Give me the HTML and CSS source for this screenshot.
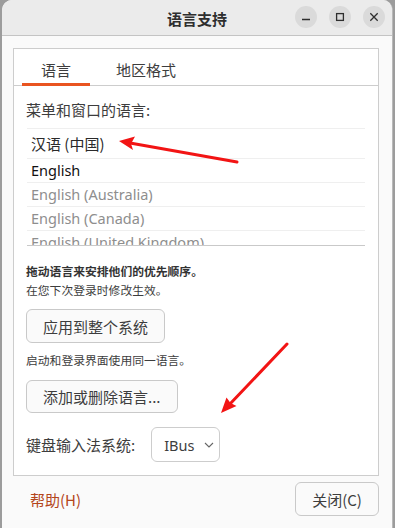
FILE: index.html
```html
<!DOCTYPE html>
<html lang="zh-CN">
<head>
<meta charset="utf-8">
<title>语言支持</title>
<link rel="stylesheet" href="styles.css">
</head>
<body>
<div class="window">
  <header class="titlebar">
    <div></div>
    <div class="title">语言支持</div>
    <div class="controls">
      <span class="wbtn"><svg width="10" height="10" viewBox="0 0 10 10"><path d="M1 7.5 H9" stroke="#2e2e2e" stroke-width="1.3"/></svg></span>
      <span class="wbtn"><svg width="10" height="10" viewBox="0 0 10 10"><rect x="1.6" y="1.6" width="6.8" height="6.8" fill="none" stroke="#2e2e2e" stroke-width="1.3"/></svg></span>
      <span class="wbtn"><svg width="10" height="10" viewBox="0 0 10 10"><path d="M1.3 1.3 L8.7 8.7 M8.7 1.3 L1.3 8.7" stroke="#2e2e2e" stroke-width="1.3"/></svg></span>
    </div>
  </header>

  <main class="content">
    <section class="notebook">
      <nav class="tabs">
        <div class="tab active">语言</div>
        <div class="tab">地区格式</div>
      </nav>
      <div class="page">
        <div class="label">菜单和窗口的语言:</div>
        <div class="langlist">
          <div class="row first">汉语 (中国)</div>
          <div class="row main">English</div>
          <div class="row dim">English (Australia)</div>
          <div class="row dim">English (Canada)</div>
          <div class="row dim">English (United Kingdom)</div>
        </div>
        <p class="note bold">拖动语言来安排他们的优先顺序。</p>
        <p class="note">在您下次登录时修改生效。</p>
        <button class="btn apply">应用到整个系统</button>
        <p class="note note3">启动和登录界面使用同一语言。</p>
        <button class="btn addrm">添加或删除语言...</button>
        <div class="imrow">
          <span class="label">键盘输入法系统:</span>
          <span class="combo">IBus<svg width="10" height="6" viewBox="0 0 10 6"><path d="M1 1 L5 5 L9 1" fill="none" stroke="#666" stroke-width="1.1"/></svg></span>
        </div>
      </div>
    </section>
    <footer class="footer">
      <span class="help">帮助(H)</span>
      <button class="btn close">关闭(C)</button>
    </footer>
  </main>
</div>

<svg class="annot" width="395" height="528" viewBox="0 0 395 528">
  <line x1="237" y1="162" x2="130" y2="143" stroke="#f21414" stroke-width="3" stroke-linecap="round"/>
  <polygon points="119,141 135,136.5 131,143.8 133,150" fill="#f21414"/>
  <line x1="287" y1="344" x2="229" y2="405" stroke="#f21414" stroke-width="3" stroke-linecap="round"/>
  <polygon points="221,413 226.5,397.5 230.5,403 236.5,406" fill="#f21414"/>
</svg>
</body>
</html>
```

FILE: styles.css
```css
* { box-sizing: border-box; }
html, body { margin: 0; padding: 0; }
body {
  width: 395px;
  height: 528px;
  overflow: hidden;
  background: #9c9c9c;
  font-family: "Noto Sans", "Noto Sans CJK SC", sans-serif;
  color: #3d3d3d;
  position: relative;
}
.window {
  margin-left: 2px;
  width: 391px;
  height: 528px;
  background: #fafafa;
  border-right: 1px solid #b9b9b9;
  border-radius: 10px 10px 0 0;
  overflow: hidden;
  display: flex;
  flex-direction: column;
}
.titlebar {
  height: 36px;
  flex: none;
  background: #ebebeb;
  border-bottom: 1px solid #c4c4c4;
  display: grid;
  grid-template-columns: 1fr auto 1fr;
  align-items: start;
}
.title {
  font-family: "Noto Sans CJK SC", sans-serif;
  font-weight: 700;
  font-size: 15px;
  line-height: 20px;
  padding-top: 9px;
  color: #2e2e2e;
}
.controls {
  display: flex;
  justify-content: flex-end;
  gap: 12px;
  padding-top: 6px;
  padding-right: 7px;
}
.wbtn {
  width: 22px;
  height: 22px;
  border-radius: 50%;
  background: #dadada;
  display: flex;
  align-items: center;
  justify-content: center;
}
.wbtn svg { display: block; }
.content {
  flex: 1;
  padding: 12px 13px 0 11px;
  display: flex;
  flex-direction: column;
}
.notebook {
  border: 1px solid #cdcdcd;
  background: #ffffff;
}
.tabs {
  height: 37px;
  display: flex;
  gap: 7px;
  padding-left: 8px;
  box-shadow: inset 0 -1px 0 #cdcdcd;
}
.tab {
  height: 37px;
  padding: 3px 19px 0;
  display: flex;
  align-items: center;
  font-family: "Noto Sans CJK SC", sans-serif;
  font-size: 15px;
  color: #3d3d3d;
}
.tab.active { box-shadow: inset 0 -3px 0 #e95420; }
.page {
  padding: 14px 13px 13px 12px;
}
.label {
  font-family: "Noto Sans CJK SC", sans-serif;
  font-size: 15px;
  line-height: 20px;
  color: #3d3d3d;
}
.langlist {
  margin: 8px 0 0 1px;
  height: 118px;
  overflow: hidden;
  border-bottom: 1px solid #c9c9c9;
}
.row {
  height: 24px;
  padding: 0 0 2px 4px;
  border-bottom: 1px solid #efefef;
  display: flex;
  align-items: center;
  font-size: 14.5px;
}
.row.first {
  height: 31px;
  padding-bottom: 1px;
  border-top: 1px solid #efefef;
  font-family: "Noto Sans CJK SC", sans-serif;
  font-size: 15px;
  color: #2a2a2a;
}
.row.main { color: #111; }
.row.dim { color: #8e8e8e; }
.note {
  margin: 0;
  font-family: "Noto Sans CJK SC", sans-serif;
  font-size: 11.8px;
  line-height: 19px;
  color: #3d3d3d;
}
.note.bold { font-weight: 700; margin-top: 15px; color: #333; }
.note3 { margin-top: 7px; }
.btn {
  display: block;
  font-family: "Noto Sans CJK SC", sans-serif;
  font-size: 15px;
  color: #3d3d3d;
  background: #fafafa;
  border: 1px solid #c9c9c9;
  border-radius: 6px;
  padding: 0 16px;
}
.apply { margin-top: 10px; height: 34px; }
.addrm { margin-top: 11px; height: 33px; }
.imrow {
  margin-top: 14px;
  display: flex;
  align-items: center;
  gap: 16px;
}
.combo {
  height: 35px;
  width: 69px;
  border: 1px solid #cdcdcd;
  border-radius: 6px;
  display: flex;
  align-items: center;
  padding-left: 12px;
  gap: 10px;
  font-size: 14.5px;
  color: #3d3d3d;
}
.combo svg { display: block; }
.footer {
  margin-top: 6px;
  display: flex;
  justify-content: space-between;
  align-items: center;
}
.help {
  padding-left: 17px;
  font-family: "Noto Sans CJK SC", sans-serif;
  font-size: 15px;
  color: #b4461c;
}
.close {
  height: 34px;
  width: 84px;
  padding: 0;
}
.annot {
  position: absolute;
  left: 0;
  top: 0;
  pointer-events: none;
}
```
